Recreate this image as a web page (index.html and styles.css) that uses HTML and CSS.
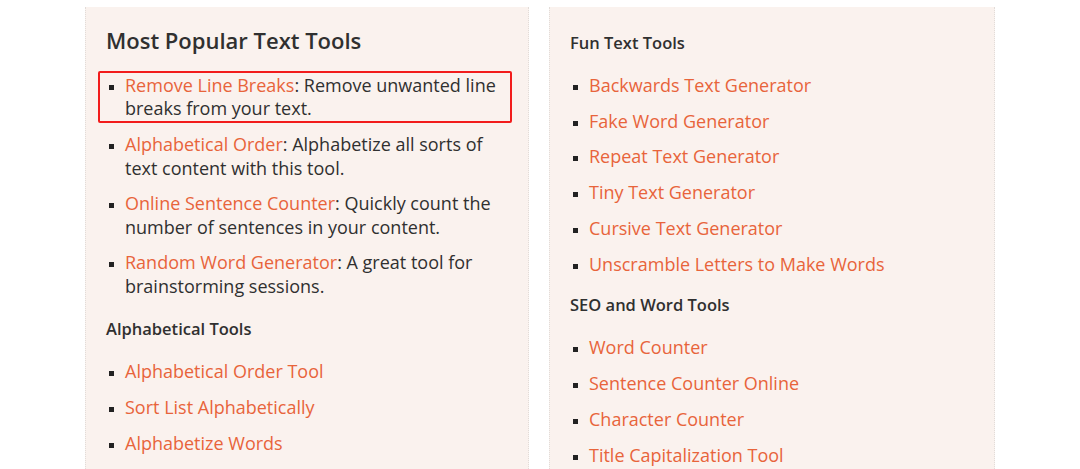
FILE: index.html
```html
<!DOCTYPE html>
<html lang="en">
<head>
<meta charset="UTF-8" />
<title>Text Tools</title>
<link rel="stylesheet" href="styles.css">
</head>
<body>
  <div class="columns">
    <section class="panel">
      <h2 class="title-big">Most Popular Text Tools</h2>
      <ul class="tools">
        <li class="highlight"><a href="#">Remove Line Breaks</a>: Remove unwanted line breaks from your text.</li>
        <li><a href="#">Alphabetical Order</a>: Alphabetize all sorts of text content with this tool.</li>
        <li><a href="#">Online Sentence Counter</a>: Quickly count the number of sentences in your content.</li>
        <li><a href="#">Random Word Generator</a>: A great tool for brainstorming sessions.</li>
      </ul>
      <h3 class="title">Alphabetical Tools</h3>
      <ul class="tools">
        <li><a href="#">Alphabetical Order Tool</a></li>
        <li><a href="#">Sort List Alphabetically</a></li>
        <li><a href="#">Alphabetize Words</a></li>
      </ul>
    </section>
    <section class="panel panel-right">
      <h3 class="title">Fun Text Tools</h3>
      <ul class="tools">
        <li><a href="#">Backwards Text Generator</a></li>
        <li><a href="#">Fake Word Generator</a></li>
        <li><a href="#">Repeat Text Generator</a></li>
        <li><a href="#">Tiny Text Generator</a></li>
        <li><a href="#">Cursive Text Generator</a></li>
        <li><a href="#">Unscramble Letters to Make Words</a></li>
      </ul>
      <h3 class="title">SEO and Word Tools</h3>
      <ul class="tools">
        <li><a href="#">Word Counter</a></li>
        <li><a href="#">Sentence Counter Online</a></li>
        <li><a href="#">Character Counter</a></li>
        <li><a href="#">Title Capitalization Tool</a></li>
      </ul>
    </section>
  </div>
</body>
</html>
```

FILE: styles.css
```css
body {
  margin: 0;
  background: #fff;
  font-family: "Open Sans", "DejaVu Sans", sans-serif;
  color: #303030;
  height: 469px;
  overflow: hidden;
}

.columns {
  display: flex;
  gap: 20px;
  padding: 7px 0 0 85px;
}

.panel {
  width: 444px;
  height: 470px;
  box-sizing: border-box;
  background: #faf2ee;
  border-left: 1px dotted #e2dcd8;
  border-right: 1px dotted #e2dcd8;
  padding: 17px 20px 0 20px;
}
.panel-right {
  width: 446px;
  padding-top: 24px;
}

.title-big {
  margin: 0 0 18px;
  font-size: 22px;
  font-weight: 600;
  line-height: 32px;
}
.title {
  margin: 0 0 19px;
  font-size: 16.5px;
  font-weight: 600;
  line-height: 24px;
}

.tools {
  list-style: square;
  margin: 0 0 19px;
  padding-left: 19px;
  font-size: 18px;
  line-height: 23.4px;
}
.panel-right .tools {
  margin-bottom: 17.5px;
}
.tools li {
  margin-bottom: 12.3px;
}
.tools li::marker {
  color: #222;
  font-size: 13px;
}
.tools a {
  color: #e8643b;
  text-decoration: none;
}

/* red frame round the first item */
.highlight {
  position: relative;
}
.highlight::before {
  content: "";
  position: absolute;
  left: -27px;
  top: -3px;
  right: -4px;
  bottom: -2px;
  border: 2px solid #f21c1c;
  border-radius: 2px;
}
```
